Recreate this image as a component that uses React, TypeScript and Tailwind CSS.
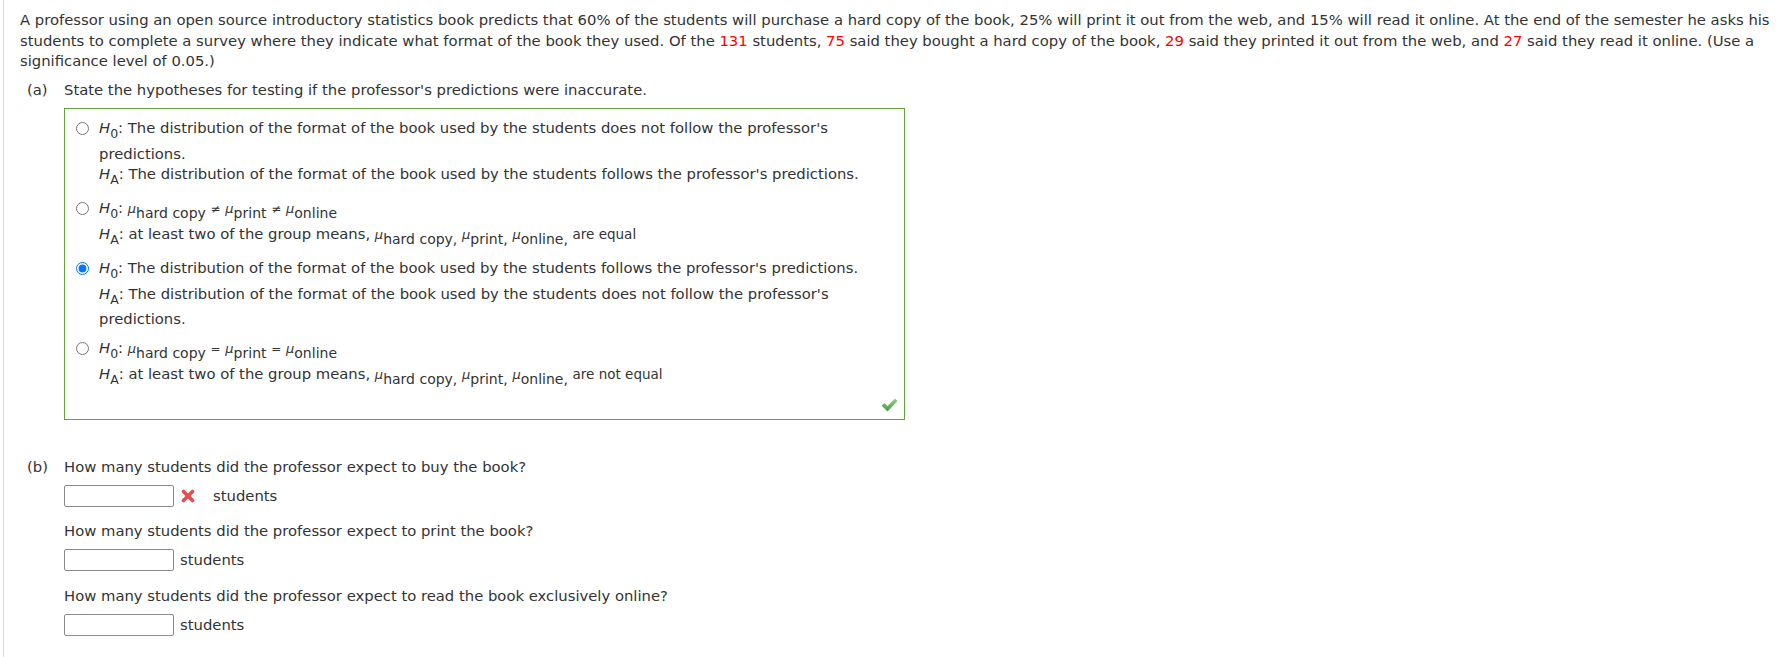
import React from 'react';

const Sub = ({ children, size = 'text-[12.5px]' }: { children: React.ReactNode; size?: string }) => (
  <span className={`relative top-[5px] ${size}`}>{children}</span>
);

const H = ({ s }: { s: string }) => (
  <>
    <i>H</i>
    <Sub>{s}</Sub>:
  </>
);

const Mu = ({ s }: { s: string }) => (
  <>
    <i className="text-[13px]">μ</i>
    <Sub size="text-[14px]">{s}</Sub>
  </>
);

const Red = ({ children }: { children: React.ReactNode }) => <span className="text-[#ff0000]">{children}</span>;

// one hypothesis option with hand-broken lines; tall lines hold subscripts
function Option({ lines, checked }: { lines: { tall?: boolean; content: React.ReactNode }[]; checked?: boolean }) {
  return (
    <label className="flex items-start">
      <input type="radio" name="hyp" defaultChecked={checked} className="m-0 mt-[4px] mr-[10px] w-[13px] h-[13px] shrink-0" />
      <div>
        {lines.map((l, i) => (
          <div key={i} className={`${l.tall ? 'h-[25.5px]' : 'h-[20px]'} leading-[20px] whitespace-nowrap`}>
            {l.content}
          </div>
        ))}
      </div>
    </label>
  );
}

function Answer({ wrong }: { wrong?: boolean }) {
  return (
    <div className="flex items-center h-[22px] mt-[8px]">
      <input type="text" className="w-[110px] h-[22px] border border-[#8c8c8c] rounded-[2px] bg-white" />
      {wrong ? (
        <>
          <svg width="14" height="14" viewBox="0 0 14 14" className="ml-[7px]">
            <path d="M2.5 2.5 L11.5 11.5 M11.5 2.5 L2.5 11.5" stroke="#ea4b4b" strokeWidth="3.6" strokeLinecap="round" />
          </svg>
          <span className="ml-[18px]">students</span>
        </>
      ) : (
        <span className="ml-[6px]">students</span>
      )}
    </div>
  );
}

export default function App() {
  return (
    <div className="min-h-[657px] bg-white text-[#333333] text-[14.8px] font-['DejaVu_Sans',sans-serif]">
      <div className="ml-[3px] min-h-[657px] border-l border-[#d6d6d6] pl-[16px] pt-[10px]">
        {/* Question text */}
        <div className="leading-[20.5px] whitespace-nowrap">
          <div>
            A professor using an open source introductory statistics book predicts that 60% of the students will purchase a hard copy of the book, 25% will print it out from the web, and 15% will read it online. At the end of the semester he asks his
          </div>
          <div>
            students to complete a survey where they indicate what format of the book they used. Of the <Red>131</Red> students, <Red>75</Red> said they bought a hard copy of the book, <Red>29</Red> said they printed it out from the web, and <Red>27</Red> said they read it online. (Use a
          </div>
          <div>significance level of 0.05.)</div>
        </div>

        {/* Part (a) */}
        <div className="mt-[8.5px] flex leading-[20.5px]">
          <span className="w-[44px] pl-[7px] shrink-0">(a)</span>
          <span>State the hypotheses for testing if the professor's predictions were inaccurate.</span>
        </div>
        <div className="mt-[7.5px] ml-[44px] w-[841px] border border-[#63a43a] pl-[11px] pr-[6px] pt-[9px] pb-[7px]">
          <div className="flex flex-col gap-[9px]">
            <Option
              lines={[
                { tall: true, content: <><H s="0" /> The distribution of the format of the book used by the students does not follow the professor's</> },
                { content: 'predictions.' },
                { tall: true, content: <><H s="A" /> The distribution of the format of the book used by the students follows the professor's predictions.</> },
              ]}
            />
            <Option
              lines={[
                { tall: true, content: <><H s="0" /> <Mu s="hard copy" /> <span className="text-[12px]">≠</span> <Mu s="print" /> <span className="text-[12px]">≠</span> <Mu s="online" /></> },
                { tall: true, content: <><H s="A" /> at least two of the group means, <Mu s="hard copy," /> <Mu s="print," /> <Mu s="online," /> <span className="text-[13.5px]">are equal</span></> },
              ]}
            />
            <Option
              checked
              lines={[
                { tall: true, content: <><H s="0" /> The distribution of the format of the book used by the students follows the professor's predictions.</> },
                { tall: true, content: <><H s="A" /> The distribution of the format of the book used by the students does not follow the professor's</> },
                { content: 'predictions.' },
              ]}
            />
            <Option
              lines={[
                { tall: true, content: <><H s="0" /> <Mu s="hard copy" /> <span className="text-[12px]">=</span> <Mu s="print" /> <span className="text-[12px]">=</span> <Mu s="online" /></> },
                { tall: true, content: <><H s="A" /> at least two of the group means, <Mu s="hard copy," /> <Mu s="print," /> <Mu s="online," /> <span className="text-[13.5px]">are not equal</span></> },
              ]}
            />
          </div>
          <div className="flex justify-end mt-[9px]">
            <svg width="17" height="14" viewBox="0 0 17 14">
              <defs>
                <linearGradient id="chk" x1="0" y1="0" x2="0" y2="1">
                  <stop offset="0" stopColor="#93d483" />
                  <stop offset="1" stopColor="#3f9b3f" />
                </linearGradient>
              </defs>
              <path d="M0.5 7.5 L3.5 5 L6.5 8 L14 0.5 L16.5 3 L6.5 13.5 Z" fill="url(#chk)" />
            </svg>
          </div>
        </div>

        {/* Part (b) */}
        <div className="mt-[37px] flex">
          <span className="w-[44px] pl-[7px] shrink-0 leading-[20px]">(b)</span>
          <div>
            <div className="leading-[20px]">How many students did the professor expect to buy the book?</div>
            <Answer wrong />
            <div className="leading-[20px] mt-[14px]">How many students did the professor expect to print the book?</div>
            <Answer />
            <div className="leading-[20px] mt-[15px]">How many students did the professor expect to read the book exclusively online?</div>
            <Answer />
          </div>
        </div>
      </div>
    </div>
  );
}
